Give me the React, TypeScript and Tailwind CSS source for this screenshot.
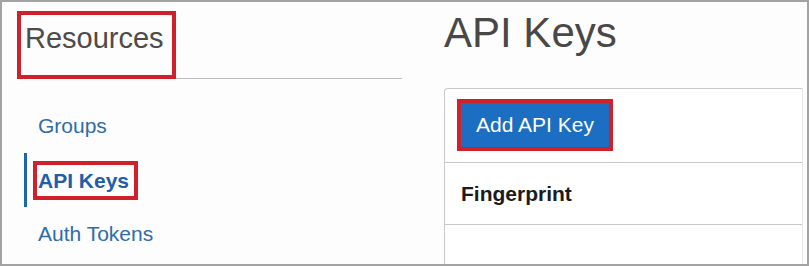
export default function App() {
  const font = { fontFamily: '"Liberation Sans", Arial, sans-serif' };

  return (
    <div
      className="flex h-[266px] w-[809px] overflow-hidden border-2 border-[#a3a3a3] bg-[#fdfdfd]"
      style={font}
    >
      {/* Sidebar */}
      <aside className="w-[400px] shrink-0 pl-[15px]">
        <div className="mt-[9px] border-b border-[#bdbdbd]">
          <div className="relative z-10 -mb-[1px] h-[68px] w-[159px] border-4 border-[#d0212b] pl-[4px] pt-[7px]">
            <span className="block text-[29px] leading-[32px] text-[#4e4b48]">Resources</span>
          </div>
        </div>

        <nav className="ml-[7px] mt-[20px] flex flex-col">
          <a className="flex h-[54px] items-center border-l-[3px] border-transparent pl-[11px] text-[21px] text-[#2f6ca9]">
            Groups
          </a>
          <a className="flex h-[54px] items-center border-l-[3px] border-[#1d66ab] pl-[6px]">
            <span className="flex h-[39px] items-center border-4 border-[#d0212b] pl-[1px] pr-[5px] pt-[2px] text-[21px] font-bold text-[#1f5ea8]">
              API Keys
            </span>
          </a>
          <a className="flex h-[54px] items-center border-l-[3px] border-transparent pl-[11px] text-[21px] text-[#2f6ca9]">
            Auth Tokens
          </a>
        </nav>
      </aside>

      {/* Main */}
      <main className="ml-[42px] flex min-w-0 flex-1 flex-col">
        <h1 className="pt-[7px] text-[42px] leading-[48px] text-[#4a4846]">API Keys</h1>

        <div className="mr-[4px] mt-[31px] h-[240px] shrink-0 rounded-tl-[4px] border border-r-[#e6e6e6] border-[#c9c9c9] bg-white">
          <div className="border-b border-[#c9c9c9] px-[12px] pb-[11px] pt-[10px]">
            <button className="flex h-[52px] w-[156px] items-center justify-center border-4 border-[#d0212b] bg-[#1b6ec2] text-[21px] text-white">
              Add API Key
            </button>
          </div>
          <div className="flex h-[62px] items-center border-b border-[#c9c9c9] pl-[16px]">
            <span className="text-[21px] font-bold text-[#1b1b1b]">Fingerprint</span>
          </div>
        </div>
      </main>
    </div>
  );
}
